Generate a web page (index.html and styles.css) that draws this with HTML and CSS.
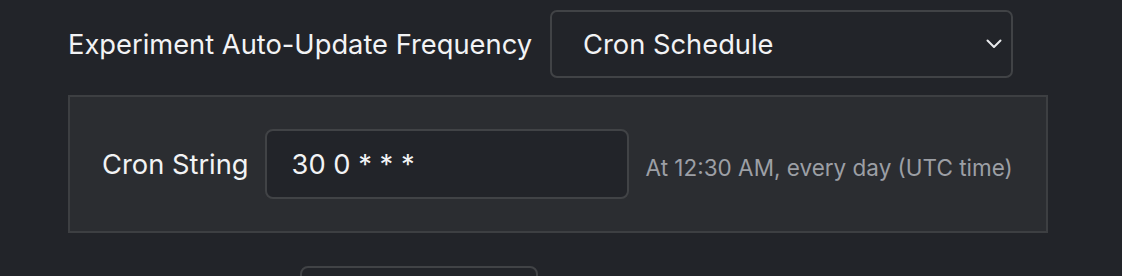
FILE: index.html
```html
<!DOCTYPE html>
<html>
<head>
<meta charset="utf-8">
<link rel="stylesheet" href="styles.css">
</head>
<body>
<div class="page">
  <div class="row">
    <label class="label">Experiment Auto-Update Frequency</label>
    <div class="select">
      <span class="select-value">Cron Schedule</span>
      <svg class="chev" width="16" height="10" viewBox="0 0 16 10"><path d="M1.5 1.5 L8 8 L14.5 1.5" fill="none" stroke="#e8e9eb" stroke-width="2" stroke-linecap="round" stroke-linejoin="round"/></svg>
    </div>
  </div>
  <div class="box">
    <label class="label">Cron String</label>
    <div class="input">30 0 * * *</div>
    <span class="hint">At 12:30 AM, every day (UTC time)</span>
  </div>
  <div class="next-row">
    <div class="next-input"></div>
  </div>
</div>
</body>
</html>
```
FILE: styles.css
```css
html, body {
  margin: 0;
  padding: 0;
  background: #222429;
  height: 100%;
  overflow: hidden;
}
body {
  font-family: Inter, "Noto Sans", sans-serif;
  color: #f2f3f5;
}
.page {
  padding: 10px 0 0 68px;
}
.row {
  display: flex;
  align-items: center;
  gap: 18px;
}
.label {
  font-size: 27.3px;
  color: #f2f3f5;
  white-space: nowrap;
  flex-shrink: 0;
}
.select {
  box-sizing: border-box;
  flex-shrink: 0;
  width: 463px;
  height: 68px;
  border: 2px solid #414346;
  border-radius: 7px;
  display: flex;
  align-items: center;
  justify-content: space-between;
  padding: 0 9px 0 31px;
  background: #222429;
}
.select-value {
  font-size: 27.3px;
}
.chev {
  display: block;
}
.box {
  box-sizing: border-box;
  margin-top: 17px;
  width: 980px;
  height: 138px;
  border: 2px solid #3d3f42;
  background: #2b2d31;
  display: flex;
  align-items: center;
  padding: 0 32px;
  gap: 16px;
}
.input {
  box-sizing: border-box;
  flex-shrink: 0;
  width: 364px;
  height: 70px;
  border: 2px solid #414346;
  border-radius: 8px;
  background: #222429;
  display: flex;
  align-items: center;
  padding-left: 25px;
  font-size: 27.3px;
}
.hint {
  font-size: 22.5px;
  color: #9c9fa5;
  white-space: nowrap;
  flex-shrink: 0;
  margin-left: 1px;
  margin-top: 6px;
}
.next-row {
  padding: 33px 0 0 232px;
}
.next-input {
  box-sizing: border-box;
  width: 238px;
  height: 60px;
  border: 2px solid #414346;
  border-radius: 8px;
}
```
